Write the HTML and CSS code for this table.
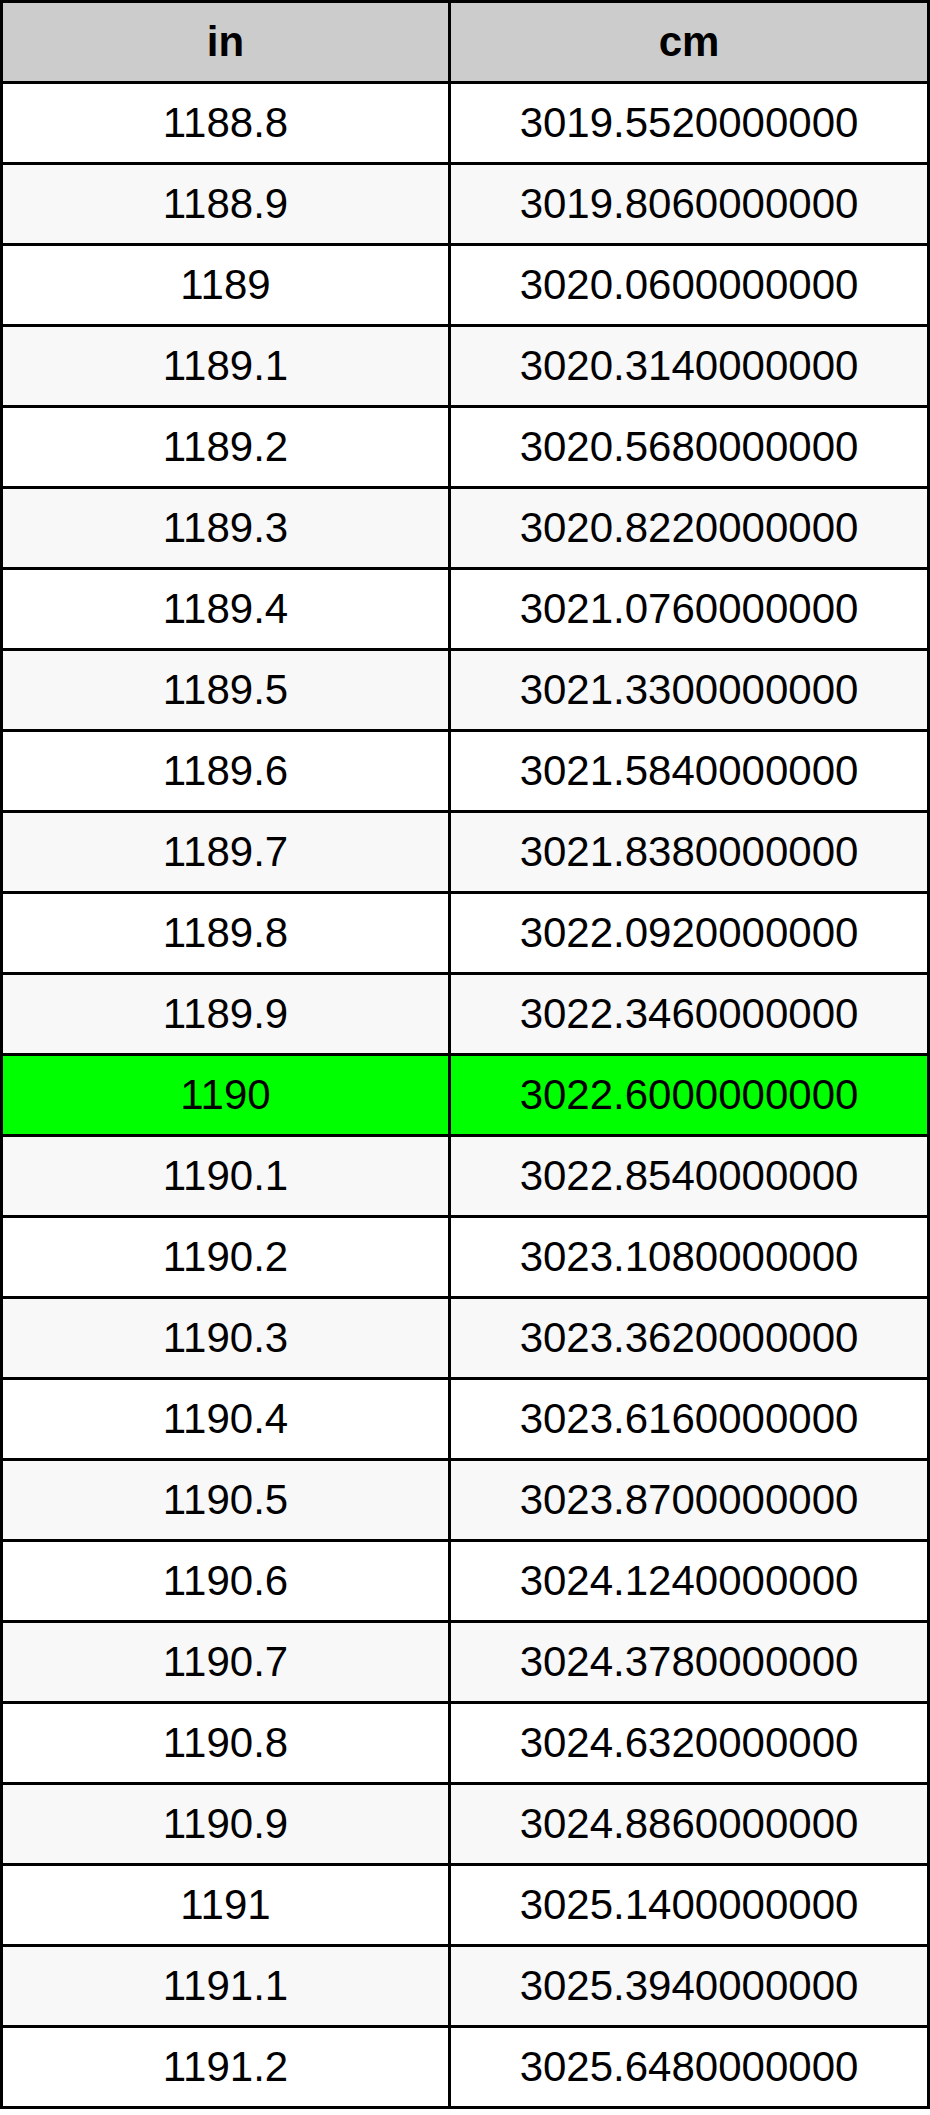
FILE: index.html
```html
<!DOCTYPE html>
<html lang="en">
<head>
<meta charset="utf-8">
<title>in to cm</title>
<link rel="stylesheet" href="styles.css">
</head>
<body>
<table class="conv">
  <colgroup><col class="col-in"><col class="col-cm"></colgroup>
  <thead>
    <tr><th>in</th><th>cm</th></tr>
  </thead>
  <tbody>
    <tr><td>1188.8</td><td>3019.5520000000</td></tr>
    <tr><td>1188.9</td><td>3019.8060000000</td></tr>
    <tr><td>1189</td><td>3020.0600000000</td></tr>
    <tr><td>1189.1</td><td>3020.3140000000</td></tr>
    <tr><td>1189.2</td><td>3020.5680000000</td></tr>
    <tr><td>1189.3</td><td>3020.8220000000</td></tr>
    <tr><td>1189.4</td><td>3021.0760000000</td></tr>
    <tr><td>1189.5</td><td>3021.3300000000</td></tr>
    <tr><td>1189.6</td><td>3021.5840000000</td></tr>
    <tr><td>1189.7</td><td>3021.8380000000</td></tr>
    <tr><td>1189.8</td><td>3022.0920000000</td></tr>
    <tr><td>1189.9</td><td>3022.3460000000</td></tr>
    <tr class="hl"><td>1190</td><td>3022.6000000000</td></tr>
    <tr><td>1190.1</td><td>3022.8540000000</td></tr>
    <tr><td>1190.2</td><td>3023.1080000000</td></tr>
    <tr><td>1190.3</td><td>3023.3620000000</td></tr>
    <tr><td>1190.4</td><td>3023.6160000000</td></tr>
    <tr><td>1190.5</td><td>3023.8700000000</td></tr>
    <tr><td>1190.6</td><td>3024.1240000000</td></tr>
    <tr><td>1190.7</td><td>3024.3780000000</td></tr>
    <tr><td>1190.8</td><td>3024.6320000000</td></tr>
    <tr><td>1190.9</td><td>3024.8860000000</td></tr>
    <tr><td>1191</td><td>3025.1400000000</td></tr>
    <tr><td>1191.1</td><td>3025.3940000000</td></tr>
    <tr><td>1191.2</td><td>3025.6480000000</td></tr>
  </tbody>
</table>
</body>
</html>
```
FILE: styles.css
```css
html, body {
  margin: 0;
  padding: 0;
  background: #ffffff;
}

.conv {
  width: 930px;
  table-layout: fixed;
  border-collapse: separate;
  border-spacing: 0;
  border-top: 3px solid #000;
  border-left: 3px solid #000;
  font-family: "Liberation Sans", Arial, Helvetica, sans-serif;
  font-size: 42px;
  color: #000;
}

.col-in {
  width: 448px;
}

.conv th,
.conv td {
  padding: 0;
  line-height: 78px;
  text-align: center;
  border-right: 3px solid #000;
  border-bottom: 3px solid #000;
  white-space: nowrap;
}

.conv th {
  background: #cccccc;
  font-weight: bold;
}

.conv tbody tr:nth-child(odd) td {
  background: #ffffff;
}

.conv tbody tr:nth-child(even) td {
  background: #f8f8f8;
}

.conv tbody tr.hl td {
  background: #00ff00;
}
```
